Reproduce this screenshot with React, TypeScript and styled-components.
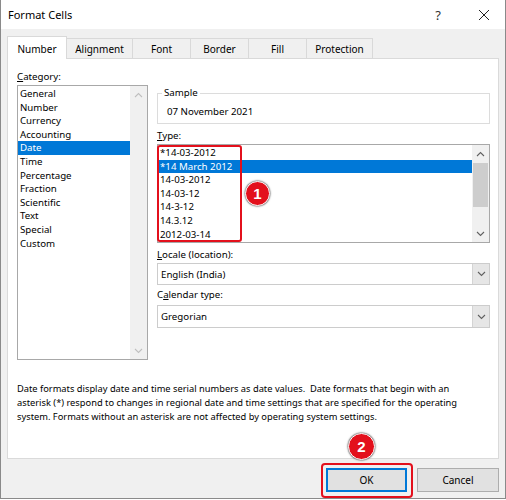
import React from "react";
import styled, { createGlobalStyle } from "styled-components";

const GlobalStyle = createGlobalStyle`
  html, body {
    margin: 0;
    padding: 0;
    background: #ffffff;
  }
  body {
    font-family: "Noto Sans", "Open Sans", sans-serif;
    font-size: 9.7px;
    color: #000;
  }
`;

const Window = styled.div`
  width: 506px;
  height: 499px;
  box-sizing: border-box;
  background: #f0f0f0;
  border: 1px solid #8a8a8a;
  border-top: none;
  display: flex;
  flex-direction: column;
`;

const TitleBar = styled.div`
  height: 29px;
  background: #ffffff;
  display: flex;
  align-items: center;
  padding-left: 7px;
`;

const Title = styled.span`
  font-size: 11px;
  flex: 1;
`;

const TitleButton = styled.div<{ $w: number }>`
  width: ${(p) => p.$w}px;
  height: 29px;
  display: flex;
  align-items: center;
  justify-content: center;
  font-size: 13px;
  color: #333;
  margin-left: 2px;
`;

const Content = styled.div`
  padding: 7px 6px 0 6px;
  display: flex;
  flex-direction: column;
`;

const TabRow = styled.div`
  height: 23px;
  margin-bottom: -1px;
  display: flex;
  align-items: flex-end;
  position: relative;
  z-index: 1;
`;

const Tab = styled.div<{ $w: number; $active?: boolean }>`
  width: ${(p) => p.$w}px;
  height: ${(p) => (p.$active ? 23 : 21)}px;
  box-sizing: border-box;
  margin-left: -1px;
  border: 1px solid #d9d9d9;
  border-bottom: ${(p) => (p.$active ? "none" : "1px solid #d9d9d9")};
  background: ${(p) => (p.$active ? "#ffffff" : "#f0f0f0")};
  position: relative;
  z-index: ${(p) => (p.$active ? 2 : 1)};
  display: flex;
  align-items: center;
  justify-content: center;
  font-size: 10px;
  padding-top: ${(p) => (p.$active ? 1 : 0)}px;
  &:first-child {
    margin-left: 0;
  }
`;

const Panel = styled.div`
  height: 401px;
  box-sizing: border-box;
  border: 1px solid #dadada;
  background: #ffffff;
  padding: 11px 8px 0 9px;
`;

const MainRow = styled.div`
  display: flex;
  gap: 9px;
`;

const LeftCol = styled.div`
  width: 131px;
  display: flex;
  flex-direction: column;
`;

const RightCol = styled.div`
  flex: 1;
  display: flex;
  flex-direction: column;
`;

const Label = styled.div<{ $mt?: number; $mb?: number }>`
  line-height: 14px;
  margin-top: ${(p) => p.$mt ?? 0}px;
  margin-bottom: ${(p) => p.$mb ?? 1}px;
  color: #000;
`;

const ListBox = styled.div<{ $h: number }>`
  height: ${(p) => p.$h}px;
  box-sizing: border-box;
  border: 1px solid #a8a8a8;
  display: flex;
  position: relative;
  background: #ffffff;
`;

const Items = styled.div`
  flex: 1;
  padding-top: 1px;
  overflow: hidden;
`;

const Item = styled.div<{ $selected?: boolean }>`
  line-height: 13.6px;
  height: 13.6px;
  padding-left: 2px;
  white-space: nowrap;
  background: ${(p) => (p.$selected ? "#0078d7" : "transparent")};
  color: ${(p) => (p.$selected ? "#ffffff" : "#000000")};
`;

const ScrollBar = styled.div`
  width: 17px;
  background: #f0f0f0;
  display: flex;
  flex-direction: column;
`;

const ArrowButton = styled.div`
  height: 17px;
  display: flex;
  align-items: center;
  justify-content: center;
`;

const Track = styled.div`
  flex: 1;
  padding: 1px 1px 0 1px;
`;

const Thumb = styled.div`
  height: 44px;
  background: #cdcdcd;
`;

const SampleField = styled.fieldset`
  margin: 16px 0 0 0;
  padding: 5px 9px 4px 9px;
  border: 1px solid #dcdcdc;
  min-width: 0;
`;

const Legend = styled.legend`
  padding: 0 2px;
  margin-left: -5px;
  line-height: 14px;
`;

const SampleText = styled.div`
  line-height: 14px;
`;

const Combo = styled.div<{ $h: number }>`
  height: ${(p) => p.$h}px;
  box-sizing: border-box;
  border: 1px solid #cccccc;
  display: flex;
  align-items: stretch;
`;

const ComboValue = styled.div`
  flex: 1;
  display: flex;
  align-items: center;
  padding-left: 3px;
`;

const ComboButton = styled.div`
  width: 16px;
  background: #e6e6e6;
  border-left: 1px solid #d4d4d4;
  display: flex;
  align-items: center;
  justify-content: center;
`;

const Description = styled.p`
  margin: 22px 0 0 0;
  line-height: 14px;
  font-size: 9.3px;
  white-space: nowrap;
`;

const ButtonRow = styled.div`
  margin-top: 9px;
  display: flex;
  justify-content: flex-end;
  gap: 10px;
`;

const Button = styled.div<{ $w: number; $default?: boolean }>`
  width: ${(p) => p.$w}px;
  height: 24px;
  box-sizing: border-box;
  background: #e1e1e1;
  border: ${(p) => (p.$default ? "2px solid #0078d7" : "1px solid #adadad")};
  display: flex;
  align-items: center;
  justify-content: center;
  font-size: 10px;
`;

const Highlighted = styled.div`
  position: relative;
  &::after {
    content: "";
    position: absolute;
    left: -5px;
    top: -5px;
    right: -6px;
    bottom: -6px;
    border: 2.5px solid #e3101c;
    border-radius: 4px;
  }
`;

const RedBox = styled.div`
  position: absolute;
  left: -1px;
  top: 0;
  width: 85px;
  height: 97px;
  box-sizing: border-box;
  border: 2.5px solid #e3101c;
  border-radius: 3px;
  pointer-events: none;
`;

const Badge = styled.div<{ $x: number; $y: number; $d: number }>`
  position: absolute;
  left: ${(p) => p.$x}px;
  top: ${(p) => p.$y}px;
  width: ${(p) => p.$d}px;
  height: ${(p) => p.$d}px;
  box-sizing: border-box;
  border-radius: 50%;
  background: #e3101c;
  border: 1.5px solid #ffffff;
  box-shadow: 0 0 1.5px 0.5px rgba(0, 0, 0, 0.55);
  color: #ffffff;
  font-family: "Liberation Sans", Arial, sans-serif;
  font-weight: bold;
  font-size: 15px;
  display: flex;
  align-items: center;
  justify-content: center;
  z-index: 3;
`;

const Chevron: React.FC<{ up?: boolean; color: string }> = ({ up, color }) => (
  <svg width="9" height="6" viewBox="0 0 9 6">
    <path
      d={up ? "M1 5 L4.5 1.5 L8 5" : "M1 1 L4.5 4.5 L8 1"}
      fill="none"
      stroke={color}
      strokeWidth="1.1"
    />
  </svg>
);

const CloseIcon = () => (
  <svg width="12" height="12" viewBox="0 0 12 12">
    <path d="M1 1 L11 11 M11 1 L1 11" stroke="#222" strokeWidth="1" fill="none" />
  </svg>
);

const tabs = [
  { name: "Number", w: 60 },
  { name: "Alignment", w: 67 },
  { name: "Font", w: 59 },
  { name: "Border", w: 59 },
  { name: "Fill", w: 59 },
  { name: "Protection", w: 67 },
];

const categories = [
  "General",
  "Number",
  "Currency",
  "Accounting",
  "Date",
  "Time",
  "Percentage",
  "Fraction",
  "Scientific",
  "Text",
  "Special",
  "Custom",
];

const types = [
  "*14-03-2012",
  "*14 March 2012",
  "14-03-2012",
  "14-03-12",
  "14-3-12",
  "14.3.12",
  "2012-03-14",
];

export default function App() {
  return (
    <>
      <GlobalStyle />
      <Window>
        <TitleBar>
          <Title>Format Cells</Title>
          <TitleButton $w={46}>?</TitleButton>
          <TitleButton $w={42}>
            <CloseIcon />
          </TitleButton>
        </TitleBar>
        <Content>
          <TabRow>
            {tabs.map((t, i) => (
              <Tab key={t.name} $w={t.w} $active={i === 0}>
                {t.name}
              </Tab>
            ))}
          </TabRow>
          <Panel>
            <MainRow>
              <LeftCol>
                <Label>
                  <u>C</u>ategory:
                </Label>
                <ListBox $h={275}>
                  <Items>
                    {categories.map((c) => (
                      <Item key={c} $selected={c === "Date"}>
                        {c}
                      </Item>
                    ))}
                  </Items>
                  <ScrollBar>
                    <ArrowButton>
                      <Chevron up color="#bfbfbf" />
                    </ArrowButton>
                    <Track />
                    <ArrowButton>
                      <Chevron color="#bfbfbf" />
                    </ArrowButton>
                  </ScrollBar>
                </ListBox>
              </LeftCol>
              <RightCol>
                <SampleField>
                  <Legend>Sample</Legend>
                  <SampleText>07 November 2021</SampleText>
                </SampleField>
                <Label $mt={5}>
                  <u>T</u>ype:
                </Label>
                <ListBox $h={99}>
                  <Items>
                    {types.map((t, i) => (
                      <Item key={t} $selected={i === 1}>
                        {t}
                      </Item>
                    ))}
                  </Items>
                  <ScrollBar>
                    <ArrowButton>
                      <Chevron up color="#606060" />
                    </ArrowButton>
                    <Track>
                      <Thumb />
                    </Track>
                    <ArrowButton>
                      <Chevron color="#606060" />
                    </ArrowButton>
                  </ScrollBar>
                  <RedBox />
                  <Badge $x={87} $y={36} $d={25}>
                    1
                  </Badge>
                </ListBox>
                <Label $mt={5}>
                  <u>L</u>ocale (location):
                </Label>
                <Combo $h={22}>
                  <ComboValue>English (India)</ComboValue>
                  <ComboButton>
                    <Chevron color="#606060" />
                  </ComboButton>
                </Combo>
                <Label $mt={3} $mb={3}>
                  C<u>a</u>lendar type:
                </Label>
                <Combo $h={23}>
                  <ComboValue>Gregorian</ComboValue>
                  <ComboButton>
                    <Chevron color="#606060" />
                  </ComboButton>
                </Combo>
              </RightCol>
            </MainRow>
            <Description>
              Date formats display date and time serial numbers as date values.&nbsp; Date
              formats that begin with an
              <br />
              asterisk (*) respond to changes in regional date and time settings that are
              specified for the operating
              <br />
              system. Formats without an asterisk are not affected by operating system
              settings.
            </Description>
          </Panel>
          <ButtonRow>
            <Highlighted>
              <Button $w={81} $default>
                OK
              </Button>
              <Badge $x={22} $y={-35} $d={27}>
                2
              </Badge>
            </Highlighted>
            <Button $w={82}>Cancel</Button>
          </ButtonRow>
        </Content>
      </Window>
    </>
  );
}
